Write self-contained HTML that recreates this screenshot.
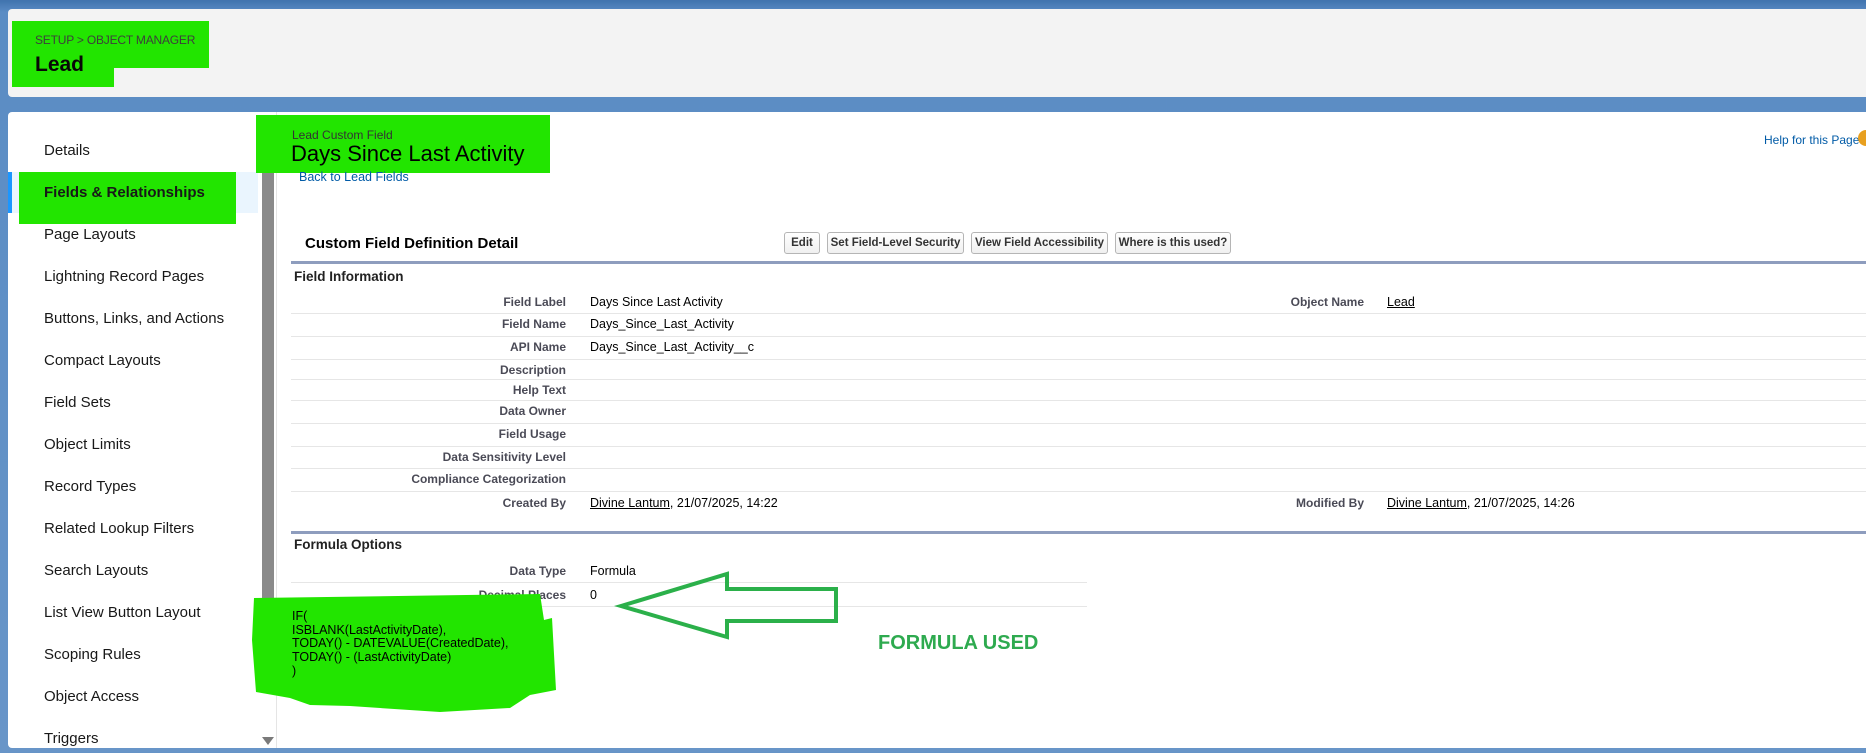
<!DOCTYPE html>
<html><head><meta charset="utf-8"><style>
*{margin:0;padding:0;box-sizing:border-box}
body{width:1866px;height:753px;overflow:hidden;position:relative;font-family:"Liberation Sans",Arial,sans-serif;background:linear-gradient(#3f72ad 0,#5a8cc4 12px,#6895c8 100%)}
.a{position:absolute;white-space:nowrap}
.g{position:absolute;background:#22e500}
.nav{position:absolute;left:44px;font-size:15px;color:#181818}
.lbl{position:absolute;font-size:12px;color:#4a4a56;font-weight:bold;text-align:right;white-space:nowrap}
.val{position:absolute;font-size:12.5px;color:#000;white-space:nowrap}
.hr{position:absolute;left:291px;right:0;height:1px;background:#e6e6e6}
.btn{position:absolute;top:232px;height:22px;border:1px solid #b5b5b5;border-radius:3px;background:linear-gradient(#fff,#f0f0f0);font-size:11.5px;font-weight:bold;color:#333;text-align:center;line-height:20px}
u{text-decoration:underline}
</style></head><body>
<div class="a" style="left:8px;top:9px;width:1870px;height:88px;background:#f3f3f3;border-radius:4px"></div>
<div class="g" style="left:12px;top:21px;width:197px;height:47px"></div>
<div class="g" style="left:12px;top:60px;width:102px;height:27px"></div>
<div class="a" style="left:35px;top:33px;font-size:12px;letter-spacing:-0.2px;color:#3e3e3c">SETUP &gt; OBJECT MANAGER</div>
<div class="a" style="left:35px;top:53px;font-size:21px;font-weight:bold;color:#080707">Lead</div>

<div class="a" style="left:8px;top:112px;width:1870px;height:636px;background:#fff;border-radius:4px"></div>
<div class="a" style="left:8px;top:172px;width:250px;height:41px;background:#eaf5fe"></div>
<div class="a" style="left:8px;top:172px;width:4px;height:41px;background:#1b96ff"></div>
<div class="g" style="left:19px;top:172px;width:217px;height:52px"></div>
<div class="nav" style="top:142px">Details</div>
<div class="nav" style="top:184px;font-weight:bold">Fields &amp; Relationships</div>
<div class="nav" style="top:226px">Page Layouts</div>
<div class="nav" style="top:268px">Lightning Record Pages</div>
<div class="nav" style="top:310px">Buttons, Links, and Actions</div>
<div class="nav" style="top:352px">Compact Layouts</div>
<div class="nav" style="top:394px">Field Sets</div>
<div class="nav" style="top:436px">Object Limits</div>
<div class="nav" style="top:478px">Record Types</div>
<div class="nav" style="top:520px">Related Lookup Filters</div>
<div class="nav" style="top:562px">Search Layouts</div>
<div class="nav" style="top:604px">List View Button Layout</div>
<div class="nav" style="top:646px">Scoping Rules</div>
<div class="nav" style="top:688px">Object Access</div>
<div class="nav" style="top:730px">Triggers</div>
<div class="a" style="left:276px;top:112px;width:1px;height:636px;background:#e5e5e5"></div>
<div class="a" style="left:262px;top:133px;width:12px;height:476px;background:#8a8a8a;border-radius:6px"></div>
<div class="a" style="left:262px;top:117px;width:0;height:0;border-left:6px solid transparent;border-right:6px solid transparent;border-bottom:8px solid #6a6a6a"></div>
<div class="a" style="left:262px;top:737px;width:0;height:0;border-left:6px solid transparent;border-right:6px solid transparent;border-top:8px solid #7a7a7a"></div>

<div class="g" style="left:256px;top:115px;width:294px;height:58px"></div>
<div class="a" style="left:292px;top:128px;font-size:12px;color:#333">Lead Custom Field</div>
<div class="a" style="left:291px;top:141px;font-size:22px;color:#000">Days Since Last Activity</div>
<div class="a" style="left:299px;top:170px;font-size:12.5px;color:#015ba7">Back to Lead Fields</div>
<div class="a" style="left:1764px;top:133px;font-size:12px;color:#015ba7">Help for this Page</div>
<div class="a" style="left:1858px;top:130px;width:16px;height:16px;border-radius:50%;background:#e8a020"></div>

<div class="a" style="left:305px;top:235px;font-size:15px;font-weight:bold;color:#000">Custom Field Definition Detail</div>
<div class="btn" style="left:784px;width:36px">Edit</div>
<div class="btn" style="left:827px;width:137px">Set Field-Level Security</div>
<div class="btn" style="left:971px;width:137px">View Field Accessibility</div>
<div class="btn" style="left:1115px;width:116px">Where is this used?</div>
<div class="a" style="left:291px;top:261px;right:0;height:3px;background:#8e9dbe"></div>
<div class="a" style="left:294px;top:269px;font-size:13.5px;font-weight:bold;color:#222">Field Information</div>

<div class="lbl" style="right:1300px;top:295px">Field Label</div><div class="val" style="left:590px;top:295px">Days Since Last Activity</div>
<div class="lbl" style="right:502px;top:295px">Object Name</div><div class="val" style="left:1387px;top:295px"><u>Lead</u></div>
<div class="hr" style="top:313px"></div>
<div class="lbl" style="right:1300px;top:317px">Field Name</div><div class="val" style="left:590px;top:317px">Days_Since_Last_Activity</div>
<div class="hr" style="top:336px"></div>
<div class="lbl" style="right:1300px;top:340px">API Name</div><div class="val" style="left:590px;top:340px">Days_Since_Last_Activity__c</div>
<div class="hr" style="top:359px"></div>
<div class="lbl" style="right:1300px;top:363px">Description</div>
<div class="hr" style="top:379px"></div>
<div class="lbl" style="right:1300px;top:383px">Help Text</div>
<div class="hr" style="top:400px"></div>
<div class="lbl" style="right:1300px;top:404px">Data Owner</div>
<div class="hr" style="top:423px"></div>
<div class="lbl" style="right:1300px;top:427px">Field Usage</div>
<div class="hr" style="top:446px"></div>
<div class="lbl" style="right:1300px;top:450px">Data Sensitivity Level</div>
<div class="hr" style="top:468px"></div>
<div class="lbl" style="right:1300px;top:472px">Compliance Categorization</div>
<div class="hr" style="top:491px"></div>
<div class="lbl" style="right:1300px;top:496px">Created By</div><div class="val" style="left:590px;top:496px"><u>Divine Lantum</u>, 21/07/2025, 14:22</div>
<div class="lbl" style="right:502px;top:496px">Modified By</div><div class="val" style="left:1387px;top:496px"><u>Divine Lantum</u>, 21/07/2025, 14:26</div>

<div class="a" style="left:291px;top:531px;right:0;height:3px;background:#8e9dbe"></div>
<div class="a" style="left:294px;top:537px;font-size:13.5px;font-weight:bold;color:#222">Formula Options</div>
<div class="lbl" style="right:1300px;top:564px">Data Type</div><div class="val" style="left:590px;top:564px">Formula</div>
<div class="a" style="left:291px;top:582px;width:796px;height:1px;background:#e6e6e6"></div>
<div class="lbl" style="right:1300px;top:588px">Decimal Places</div><div class="val" style="left:590px;top:588px">0</div>
<div class="a" style="left:291px;top:606px;width:796px;height:1px;background:#e6e6e6"></div>

<svg class="a" style="left:240px;top:580px" width="340" height="140"><path d="M14 18 L300 14 L304 40 L312 38 L316 110 L290 115 L270 128 L200 132 L110 126 L70 125 L50 118 L16 112 L12 60 Z" fill="#22e500"/></svg>
<div class="a" style="left:292px;top:610px;font-size:12.5px;line-height:13.7px;color:#000">IF(<br>ISBLANK(LastActivityDate),<br>TODAY() - DATEVALUE(CreatedDate),<br>TODAY() - (LastActivityDate)<br>)</div>

<svg class="a" style="left:610px;top:565px" width="240" height="85"><path d="M11 41 L117 9 L117 24 L226 24 L226 56 L117 56 L117 72 Z" fill="none" stroke="#2bb04a" stroke-width="4" stroke-linejoin="miter"/></svg>
<div class="a" style="left:878px;top:632px;font-size:20px;font-weight:bold;color:#2eaa4f">FORMULA USED</div>
</body></html>
